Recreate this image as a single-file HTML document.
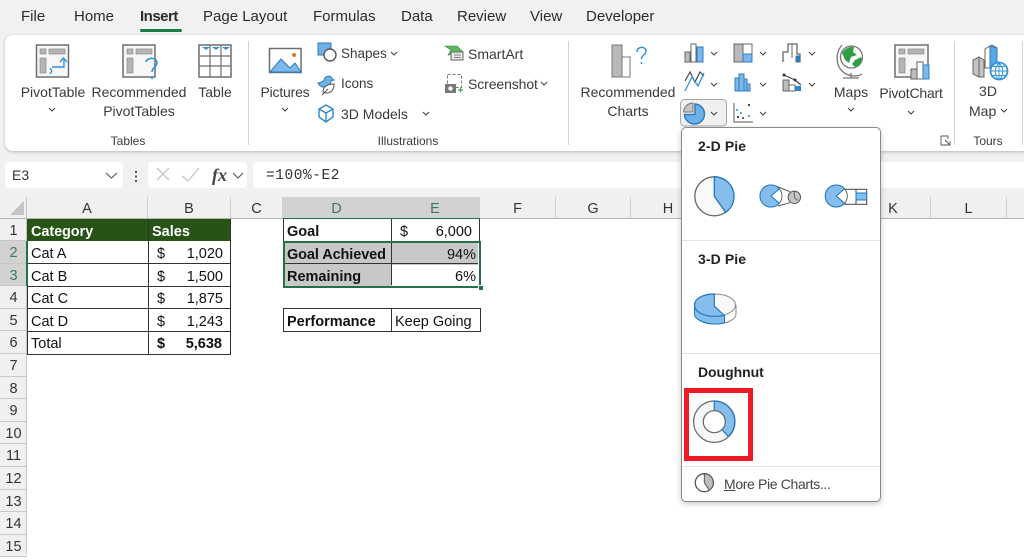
<!DOCTYPE html>
<html><head><meta charset="utf-8"><style>
html,body{margin:0;padding:0}
body{width:1024px;height:554px;overflow:hidden;background:#fff;position:relative;font-family:"Liberation Sans",sans-serif;color:#242424}
.a{position:absolute}
.t{position:absolute;white-space:nowrap;line-height:16px;font-size:14px;color:#3a3a3a}
.c{transform:translateX(-50%)}
.tab{font-size:15px;color:#2b2b2b}
.h{position:absolute;top:197px;height:21px;line-height:24px;text-align:center;font-size:14.5px;color:#333;background:#f0f0f0;border-right:1px solid #cfcfcf;box-sizing:border-box}
.r{position:absolute;left:0;width:27px;height:22.6px;line-height:25px;text-align:center;font-size:14.5px;color:#333;background:#f0f0f0;border-bottom:1px solid #c8c8c8;box-sizing:border-box}
.cell{position:absolute;white-space:nowrap;font-size:14.5px;line-height:22px;color:#111;margin-top:1px}
.b{font-weight:bold}
.ln{position:absolute;background:#333}
svg{position:absolute;overflow:visible}
</style></head><body>
<div class="a" style="left:0;top:0;width:1024px;height:197px;background:#f1f1f1"></div>

<div class="t tab" style="left:21px;top:9px">File</div>
<div class="t tab" style="left:74px;top:9px">Home</div>
<div class="t tab" style="left:140px;top:9px;font-weight:bold;letter-spacing:-.5px">Insert</div>
<div class="a" style="left:140px;top:29px;width:42px;height:3px;background:#1b7a46;border-radius:2px"></div>
<div class="t tab" style="left:203px;top:9px">Page Layout</div>
<div class="t tab" style="left:313px;top:9px">Formulas</div>
<div class="t tab" style="left:401px;top:9px">Data</div>
<div class="t tab" style="left:457px;top:9px">Review</div>
<div class="t tab" style="left:530px;top:9px">View</div>
<div class="t tab" style="left:586px;top:9px">Developer</div>

<div class="a" style="left:5px;top:35px;width:1030px;height:116px;background:#fff;border-radius:8px;box-shadow:0 1px 3px rgba(0,0,0,.25)"></div>
<div class="a" style="left:248px;top:41px;width:1px;height:104px;background:#d4d4d4"></div>
<div class="a" style="left:568px;top:41px;width:1px;height:104px;background:#d4d4d4"></div>
<div class="a" style="left:954px;top:41px;width:1px;height:104px;background:#d4d4d4"></div>
<div class="a" style="left:1022px;top:41px;width:1px;height:104px;background:#d4d4d4"></div>

<!-- Tables -->
<svg style="left:0;top:0" width="1024" height="160" fill="none">
 <g stroke="#6e6e6e" stroke-width="1.5">
  <rect x="36.500" y="45" width="32" height="32" fill="#f7f7f7"/>
  <rect x="123" y="45" width="32" height="32" fill="#f7f7f7"/>
  <rect x="199" y="45" width="32" height="32" fill="#fff"/>
  <path d="M199 56h32M199 66h32M210 45v32M221 45v32" stroke-width="1.2"/>
  <rect x="269.500" y="48.500" width="31.500" height="24" fill="#fff"/>
 </g>
 <g fill="#b5b5b5" stroke="#8a8a8a" stroke-width=".7">
  <rect x="40" y="49" width="6" height="5"/><rect x="49" y="49" width="16" height="5"/><rect x="40" y="58" width="6" height="15"/>
  <rect x="127" y="49" width="6" height="5"/><rect x="136" y="49" width="16" height="5"/><rect x="127" y="58" width="6" height="15"/>
 </g>
 <path d="M52 67h12v-8M60 62l3.500-4 3.500 4M52 71l-2-3m2 3l-2 3" stroke="#2f93dc" stroke-width="1.4"/>
 <path d="M146 62c1-5 11-5 11 1 0 4-5 4-5 9M152 77v2" stroke="#2f93dc" stroke-width="1.6"/>
 <path d="M202 47h8l-4 3zM212 47h8l-4 3zM222 47h8l-4 3z" fill="#2f93dc"/>
 <!-- pictures -->
 <path d="M270 72l11-13 9 9 5-5 6 9z" fill="#7db8e8" stroke="#2b7cc0"/>
 <circle cx="294" cy="55" r="2" fill="#e87722"/>
 <!-- shapes -->
 <rect x="318" y="43" width="13" height="12" fill="#6fb1e6" stroke="#2b7cc0"/>
 <circle cx="330" cy="55" r="6" fill="#fff" stroke="#555" stroke-width="1.4"/>
 <!-- icons -->
 <path d="M318 83c3-1 5-1 6-3 1-5 8-5 8-1l2 1-3 1c0 3-2 5-5 6h-4c-2-1-3-2-4-4z" fill="#6fb1e6" stroke="#2b7cc0"/>
 <path d="M323 92c0-5 4-8 11-8 0 6-3 9-8 9zM322 95l6-6" fill="#fff" stroke="#555"/>
 <!-- 3d -->
 <path d="M326 105l7 4v8l-7 5-7-5v-8zM319 109l7 4 7-4M326 113v8" stroke="#2b87d0" stroke-width="1.4"/>
 <!-- smartart -->
 <path d="M445 46h12l6 6h-12l3 3h-6l3-5z" fill="#5cb85c" stroke="#2e8b3f" stroke-width=".6"/>
 <rect x="451" y="52" width="12" height="8" fill="#e8e8e8" stroke="#666"/>
 <path d="M454 55h7M454 57.500h7" stroke="#666" stroke-width=".8"/>
 <!-- screenshot -->
 <rect x="447.500" y="74.500" width="14" height="13" stroke="#777" stroke-dasharray="3 2"/>
 <rect x="445" y="84" width="11" height="9" fill="#777"/><circle cx="450.500" cy="88.500" r="2.200" fill="#fff"/>
 <path d="M458 90h5M460.500 87.500v5" stroke="#3aa655" stroke-width="1.2"/>
 <!-- recommended charts -->
 <rect x="612" y="45" width="10" height="32" fill="#b9b9b9" stroke="#777"/>
 <rect x="622" y="57" width="8" height="20" fill="#fff" stroke="#777"/>
 <path d="M637 52c0-6 9-6 9-1 0 4-4.500 4-4.500 8M641.500 62v2" stroke="#2f93dc" stroke-width="1.5"/>
 <!-- small charts row 1 -->
 <path d="M685 52h5v10h-5z" fill="#bdbdbd" stroke="#666"/><path d="M691 44h5v18h-5z" stroke="#666" fill="#fff"/><path d="M697 47h6v15h-6z" fill="#7db8e8" stroke="#2b7cc0"/>
 <rect x="734" y="44" width="9" height="18" fill="#b9b9b9" stroke="#666"/><rect x="743" y="44" width="9" height="18" fill="#fff" stroke="#666"/><rect x="743" y="54" width="9" height="8" fill="#7db8e8" stroke="#2b7cc0"/>
 <path d="M783 62v-10h5v-8h9v10h3v8" stroke="#666" fill="none" stroke-width="1.3"/><path d="M788 52v-8h4v14M796 56h4v6h-4z" stroke="#666"/><rect x="796" y="56" width="4" height="6" fill="#2b7cc0"/>
 <!-- row 2 -->
 <path d="M685 81l5-9 5 10 5-10 4 4" stroke="#444" stroke-width="1.2"/><path d="M685 91l7-14 6 9 6-13" stroke="#2f93dc" stroke-width="1.3"/>
 <path d="M735 91V78h4v13zM739 91V83M739 91V74h5v17zM744 91V79h3v12zM747 91v-7h3v7z" fill="#7db8e8" stroke="#2b7cc0"/>
 <path d="M784 75l11 5 6 5" stroke="#444" stroke-width="1.2"/><circle cx="784" cy="75" r="1.500" fill="#333"/><circle cx="795" cy="80" r="1.500" fill="#333"/>
 <rect x="783" y="80" width="6" height="11" fill="#bdbdbd" stroke="#666"/><rect x="789" y="85" width="6" height="6" fill="#fff" stroke="#666"/><rect x="795" y="86" width="6" height="5" fill="#2b87d0"/>
 <!-- pie button -->
 <rect x="680.500" y="99.500" width="46" height="26.500" rx="4" fill="#f0f0f0" stroke="#a8a8a8"/>
 <path d="M693 103v9h-9.500a9.500 9.500 0 0 1 9.500-9z" fill="#c4c4c4" stroke="#777"/>
 <path d="M695 104a10 10 0 1 1-10.500 10.500h10.500z" fill="#6fb1e6" stroke="#2b7cc0" stroke-width="1.500"/>
 <!-- scatter -->
 <path d="M734 103v19h19" stroke="#777" stroke-width="1.200"/>
 <g fill="#2f93dc"><circle cx="737" cy="110" r="1"/><circle cx="741" cy="113" r="1"/><circle cx="749" cy="116" r="1"/></g>
 <g fill="#333"><circle cx="738" cy="117" r="1.100"/><circle cx="749" cy="105" r="1.100"/><circle cx="743" cy="118" r="1"/></g>
 <!-- maps globe -->
 <circle cx="851.500" cy="57" r="11" fill="#fff" stroke="#777" stroke-width="1.300"/>
 <path d="M842 53c3-5 9-7 12-6l-1 5 4 3-6 2-2 6-4-3zM855 60l6-3 1 2-2 6-5 2-3-3z" fill="#2f9e44"/>
 <path d="M842 45c-7 8-6 20 0 26s16 6 20 3" stroke="#777" stroke-width="1.300"/><path d="M851 73v5M843 78h16" stroke="#777" stroke-width="1.300"/>
 <!-- pivotchart -->
 <rect x="895" y="45" width="33" height="32" fill="#f7f7f7" stroke="#6e6e6e" stroke-width="1.500"/>
 <rect x="899" y="49" width="6" height="5" fill="#b5b5b5" stroke="#8a8a8a" stroke-width=".7"/><rect x="908" y="49" width="16" height="5" fill="#b5b5b5" stroke="#8a8a8a" stroke-width=".7"/><rect x="899" y="58" width="6" height="15" fill="#b5b5b5" stroke="#8a8a8a" stroke-width=".7"/>
 <rect x="911" y="69" width="6" height="10" fill="#bdbdbd" stroke="#666"/><rect x="917" y="62" width="6" height="17" fill="#fff" stroke="#666"/><rect x="923" y="65" width="6" height="14" fill="#7db8e8" stroke="#2b7cc0"/>
 <!-- 3d map -->
 <path d="M973 60l6-3v20l-6-3zM979 57l5 3v17l-5 0z" fill="#c4c4c4" stroke="#666"/>
 <path d="M985 49l7-4 5 3v20h-12z" fill="#fff" stroke="#666"/><path d="M990 46l7 2v20h-7z" fill="#5aa7e6" stroke="#2b7cc0"/>
 <circle cx="999" cy="71" r="8.500" fill="#fff" stroke="#2f93dc" stroke-width="1.800"/>
 <path d="M991 71h17M999 63v17M993 66.500h12M993 75.500h12M999 63c-5 5-5 12 0 17M999 63c5 5 5 12 0 17" stroke="#2f93dc" stroke-width=".9"/>
 <!-- launcher -->
 <path d="M941 136v9h9v-3M941 136h7v3M945 140l5 5M950 141v4h-4" stroke="#555" stroke-width=".9"/>
 <!-- chevrons -->
 <g stroke="#444" stroke-width="1.100">
  <path d="M49 108l3 3 3-3M282 108l3 3 3-3M908 111l3 3 3-3M848 108l3 3 3-3"/>
  <path d="M391 52l3 3 3-3M423 112l3 3 3-3M541 82l3 3 3-3"/>
  <path d="M711 52l3 3 3-3M760 52l3 3 3-3M809 52l3 3 3-3M711 83l3 3 3-3M760 83l3 3 3-3M809 83l3 3 3-3M711 112l3 3 3-3M760 112l3 3 3-3M1001 109l3 3 3-3"/>
 </g>
</svg>

<div class="t c" style="left:53px;top:84px">PivotTable</div>
<div class="t c" style="left:139px;top:84px">Recommended</div>
<div class="t c" style="left:139px;top:103px">PivotTables</div>
<div class="t c" style="left:215px;top:84px">Table</div>
<div class="t c" style="left:128px;top:133px;font-size:12px">Tables</div>
<div class="t c" style="left:285px;top:84px;letter-spacing:-.2px">Pictures</div>
<div class="t" style="left:341px;top:46px;font-size:13.500px">Shapes</div>
<div class="t" style="left:341px;top:76px;font-size:13.500px">Icons</div>
<div class="t" style="left:341px;top:106px">3D Models</div>
<div class="t" style="left:468px;top:46px">SmartArt</div>
<div class="t" style="left:468px;top:76px;letter-spacing:-.1px">Screenshot</div>
<div class="t c" style="left:408px;top:133px;font-size:12px">Illustrations</div>
<div class="t c" style="left:628px;top:84px">Recommended</div>
<div class="t c" style="left:628px;top:103px">Charts</div>
<div class="t c" style="left:851px;top:84px">Maps</div>
<div class="t c" style="left:911px;top:85px;letter-spacing:-.2px">PivotChart</div>
<div class="t c" style="left:988px;top:83px">3D</div>
<div class="t" style="left:969px;top:103px">Map</div>
<div class="t c" style="left:988px;top:133px;font-size:12px">Tours</div>

<!-- formula bar -->
<div class="a" style="left:5px;top:162px;width:118px;height:26px;background:#fff;border-radius:4px"></div>
<div class="t" style="left:12px;top:167px;color:#333">E3</div>
<div class="a" style="left:148px;top:162px;width:99px;height:26px;background:#fff;border-radius:4px"></div>
<div class="a" style="left:253px;top:162px;width:790px;height:26px;background:#fff;border-radius:4px"></div>
<div class="t" style="left:266px;top:168px;font-family:'Liberation Mono',monospace;font-size:14.500px;letter-spacing:.55px;color:#333">=100%-E2</div>
<div class="t" style="left:212px;top:167px;font-family:'Liberation Serif',serif;font-style:italic;font-weight:bold;font-size:18px;color:#444">fx</div>
<svg style="left:0;top:155px" width="260" height="40" fill="none">
 <path d="M106 18l5.500 5 5.500-5M233 18l5 5 5-5" stroke="#555" stroke-width="1.100"/>
 <path d="M136 16v2M136 20.500v2M136 25v2" stroke="#555" stroke-width="2"/>
 <path d="M157 13l12 12M169 13l-12 12" stroke="#c4c4c4" stroke-width="1.300"/>
 <path d="M182 21l6 5 11-13" stroke="#c4c4c4" stroke-width="1.300"/>
</svg>

<!-- grid headers -->
<div class="a" style="left:0;top:197px;width:1024px;height:22px;background:#f0f0f0;border-bottom:1px solid #b4b4b4;box-sizing:border-box"></div>
<div class="h" style="left:0;width:27px"></div>
<svg style="left:8px;top:200px" width="18" height="16"><path d="M16 1v14H2z" fill="#c4c4c4"/></svg>
<div class="h" style="left:27px;width:121px">A</div>
<div class="h" style="left:148px;width:83px">B</div>
<div class="h" style="left:231px;width:52px">C</div>
<div class="h" style="left:283px;width:108px;background:#d2d2d2;color:#3d7a5a">D</div>
<div class="h" style="left:391px;width:89px;background:#d2d2d2;color:#3d7a5a">E</div>
<div class="h" style="left:480px;width:76px">F</div>
<div class="h" style="left:556px;width:75px">G</div>
<div class="h" style="left:631px;width:75px">H</div>
<div class="h" style="left:856px;width:75px">K</div>
<div class="h" style="left:931px;width:76px">L</div>
<div class="a" style="left:0;top:218px;width:1024px;height:1px;background:#b4b4b4"></div>

<div class="r" style="top:218.500px">1</div>
<div class="r" style="top:241px;background:#d2d2d2;color:#3d7a5a">2</div>
<div class="r" style="top:263.600px;background:#d2d2d2;color:#3d7a5a">3</div>
<div class="r" style="top:286.200px">4</div>
<div class="r" style="top:308.800px">5</div>
<div class="r" style="top:331.400px">6</div>
<div class="r" style="top:354px">7</div>
<div class="r" style="top:376.600px">8</div>
<div class="r" style="top:399.200px">9</div>
<div class="r" style="top:421.800px">10</div>
<div class="r" style="top:444.400px">11</div>
<div class="r" style="top:467px">12</div>
<div class="r" style="top:489.600px">13</div>
<div class="r" style="top:512.200px">14</div>
<div class="r" style="top:534.800px">15</div>
<div class="a" style="left:26px;top:197px;width:1px;height:357px;background:#c4c4c4"></div>

<!-- table 1 -->
<div class="a" style="left:27px;top:219px;width:204px;height:22px;background:#275317"></div>
<div class="ln" style="left:27px;top:263px;width:204px;height:1px"></div>
<div class="ln" style="left:27px;top:286px;width:204px;height:1px"></div>
<div class="ln" style="left:27px;top:308px;width:204px;height:1px"></div>
<div class="ln" style="left:27px;top:331px;width:204px;height:1px"></div>
<div class="ln" style="left:27px;top:354px;width:204px;height:1px"></div>
<div class="ln" style="left:148px;top:219px;width:1px;height:136px"></div>
<div class="ln" style="left:230px;top:219px;width:1px;height:136px"></div>
<div class="ln" style="left:27px;top:241px;width:1px;height:114px"></div>
<div class="a" style="left:26px;top:241px;width:2px;height:45px;background:#217346"></div>
<div class="cell b" style="left:31px;top:220px;color:#fff;letter-spacing:-.1px">Category</div>
<div class="cell b" style="left:152px;top:220px;color:#fff">Sales</div>
<div class="cell" style="left:31px;top:242px">Cat A</div>
<div class="cell" style="left:31px;top:265px">Cat B</div>
<div class="cell" style="left:31px;top:287px">Cat C</div>
<div class="cell" style="left:31px;top:310px">Cat D</div>
<div class="cell" style="left:31px;top:332px">Total</div>
<div class="cell" style="left:157px;top:242px">$</div><div class="cell" style="right:801px;top:242px">1,020</div>
<div class="cell" style="left:157px;top:265px">$</div><div class="cell" style="right:801px;top:265px">1,500</div>
<div class="cell" style="left:157px;top:287px">$</div><div class="cell" style="right:801px;top:287px">1,875</div>
<div class="cell" style="left:157px;top:310px">$</div><div class="cell" style="right:801px;top:310px">1,243</div>
<div class="cell b" style="left:157px;top:332px">$</div><div class="cell b" style="right:802px;top:332px">5,638</div>

<!-- table 2 -->
<div class="a" style="left:285px;top:242px;width:193px;height:44px;background:#c8c8c8"></div>
<div class="a" style="left:392px;top:265px;width:86px;height:21px;background:#fff"></div>
<div class="ln" style="left:283px;top:219px;width:1px;height:66px"></div>
<div class="ln" style="left:391px;top:219px;width:1px;height:66px"></div>
<div class="ln" style="left:479px;top:219px;width:1px;height:23px"></div>
<div class="ln" style="left:285px;top:263px;width:193px;height:1px"></div>
<div class="a" style="left:283px;top:218px;width:197px;height:1px;background:#217346"></div>
<div class="a" style="left:283px;top:241px;width:198px;height:47px;border:2px solid #217346;box-sizing:border-box"></div>
<div class="a" style="left:478px;top:284.500px;background:#217346;border:1px solid #fff;width:4px;height:4px"></div>
<div class="cell b" style="left:287px;top:220px">Goal</div>
<div class="cell" style="left:400px;top:220px">$</div><div class="cell" style="right:552px;top:220px">6,000</div>
<div class="cell b" style="left:287px;top:243px;letter-spacing:-.1px">Goal Achieved</div>
<div class="cell" style="right:548px;top:243px">94%</div>
<div class="cell b" style="left:287px;top:265px">Remaining</div>
<div class="cell" style="right:548px;top:265px">6%</div>
<div class="a" style="left:283px;top:308px;width:198px;height:24px;border:1px solid #333;box-sizing:border-box"></div>
<div class="ln" style="left:391px;top:308px;width:1px;height:24px"></div>
<div class="cell b" style="left:287px;top:310px">Performance</div>
<div class="cell" style="left:395px;top:310px">Keep Going</div>

<!-- dropdown -->
<div class="a" style="left:680.500px;top:127px;width:200px;height:375px;background:#fff;border:1px solid #8a8a8a;border-radius:5px;box-sizing:border-box;box-shadow:0 2px 6px rgba(0,0,0,.22)"></div>
<div class="a" style="left:682px;top:240px;width:198px;height:1px;background:#e2e2e2"></div>
<div class="a" style="left:682px;top:353px;width:198px;height:1px;background:#e2e2e2"></div>
<div class="a" style="left:682px;top:466px;width:198px;height:1px;background:#e2e2e2"></div>
<div class="t b" style="left:698px;top:138px;font-size:14px;font-weight:bold;color:#222;letter-spacing:.1px">2-D Pie</div>
<div class="t b" style="left:698px;top:251px;font-size:14px;font-weight:bold;color:#222;letter-spacing:.1px">3-D Pie</div>
<div class="t b" style="left:698px;top:364px;font-size:14px;font-weight:bold;color:#222;letter-spacing:-.05px">Doughnut</div>
<div class="a" style="left:684px;top:388px;width:69px;height:73px;border:5px solid #ed1c24;box-sizing:border-box"></div>
<div class="t" style="left:724px;top:476px;color:#444;letter-spacing:-.35px"><span style="text-decoration:underline">M</span>ore Pie Charts...</div>

<svg style="left:0;top:0" width="1024" height="554" fill="none">
 <!-- 2D pie -->
 <circle cx="714.300" cy="196.300" r="19.500" fill="#f9f9f9" stroke="#666" stroke-width="1.300"/>
 <path d="M714.300 176.800a19.500 19.500 0 0 1 11.400 35.500L714.300 196.300z" fill="#85bdec" stroke="#1f78c1" stroke-width="1.300"/>
 <!-- pie of pie -->
 <path d="M775.700 186l14.300 5.700M778 206l12-3.300" stroke="#555"/>
 <circle cx="771" cy="196" r="11" fill="#fff" stroke="#666"/>
 <path d="M779.300 188.800a11 11 0 1 0 0 14.400L771 196z" fill="#85bdec" stroke="#1f78c1"/>
 <circle cx="794.300" cy="197.300" r="6.200" fill="#c4c4c4" stroke="#555"/>
 <path d="M794.300 191v6.300l3 3" stroke="#555" stroke-width=".8"/>
 <!-- bar of pie -->
 <rect x="845" y="189.300" width="21.700" height="15" fill="#fff" stroke="#444"/>
 <path d="M856 189.300v15" stroke="#444"/>
 <rect x="856" y="193" width="10.700" height="7" fill="#85bdec" stroke="#1f78c1"/>
 <circle cx="836.300" cy="196" r="11" fill="#fff" stroke="#666"/>
 <path d="M844.600 188.800a11 11 0 1 0 0 14.400L836.300 196z" fill="#85bdec" stroke="#1f78c1"/>
 <!-- 3D pie -->
 <path d="M694.500 305v9c0 5 9 10 21 10s20.500-5 20.500-10v-9" fill="#fff" stroke="#888"/>
 <path d="M694.500 305v9c0 5 9 10 21 10 3 0 6 0 9-1.500V316z" fill="#85bdec" stroke="#1f78c1"/>
 <ellipse cx="715" cy="305" rx="20.500" ry="11" fill="#f9f9f9" stroke="#888"/>
 <path d="M714.300 294c-10.500 0-19.800 4-19.800 11s9 11.500 21 11.300c3 0 6-.3 8.800-.8l-10-9.500z" fill="#85bdec" stroke="#1f78c1" stroke-width="1.200"/>
 <!-- doughnut -->
 <circle cx="714.300" cy="421.700" r="20.700" fill="#f7f7f7" stroke="#666" stroke-width="1.200"/>
 <path d="M714.300 401a20.700 20.700 0 0 1 14 35.700l-6.600-7.400a11 11 0 0 0-7.400-18.600z" fill="#85bdec" stroke="#1f78c1" stroke-width="1.200"/>
 <circle cx="714.300" cy="421.700" r="11" fill="#fff" stroke="#666" stroke-width="1.200"/>
 <!-- more pie -->
 <circle cx="704.300" cy="482.700" r="9" fill="#fff" stroke="#555" stroke-width="1.300"/>
 <path d="M704.300 473.700a9 9 0 0 1 5 16.500l-5-7.500z" fill="#bdbdbd" stroke="#555"/>
</svg>
</body></html>
